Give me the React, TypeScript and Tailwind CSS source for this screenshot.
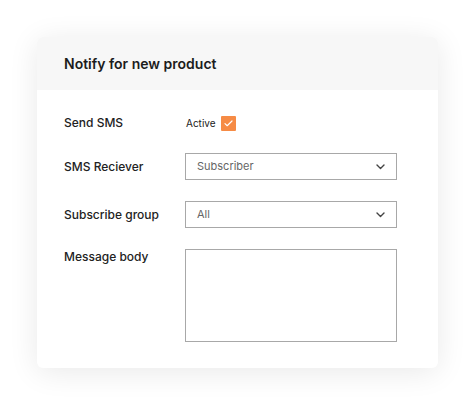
import React from "react";

function Chevron() {
  return (
    <svg width="9" height="6" viewBox="0 0 9 6" fill="none" className="shrink-0">
      <path d="M1 1l3.5 3.5L8 1" stroke="#444" strokeWidth="1.4" strokeLinecap="round" strokeLinejoin="round" />
    </svg>
  );
}

function SelectBox({ value }: { value: string }) {
  return (
    <div className="flex h-[27px] w-[212px] items-center justify-between border border-[#a8a8a8] bg-white pl-[11px] pr-[11px]">
      <span className="text-[11px] text-[#666]">{value}</span>
      <Chevron />
    </div>
  );
}

export default function App() {
  return (
    <div className="min-h-[405px] w-[474px] bg-white pl-[37px] pt-[37px] font-['Inter','Noto_Sans',sans-serif]">
      <div className="w-[401px] overflow-hidden rounded-[6px] bg-white shadow-[0_4px_30px_rgba(0,0,0,0.09)]">
        <div className="flex h-[53px] items-center bg-[#f7f7f7] pl-[27px]">
          <h1 className="text-[14px] font-semibold text-[#1c1c1c]">Notify for new product</h1>
        </div>
        <div className="pb-[26px] pl-[27px] pt-[23px]">
          <div className="flex h-[20px] items-center">
            <span className="w-[122px] text-[12px] font-medium text-[#222]">Send SMS</span>
            <span className="text-[10px] text-[#222]">Active</span>
            <span className="ml-[5px] flex h-[15px] w-[15px] items-center justify-center rounded-[1px] bg-[#f68b45]">
              <svg width="9" height="7" viewBox="0 0 9 7" fill="none">
                <path d="M1 3.6l2.2 2.1L8 1" stroke="#fff" strokeWidth="1.2" strokeLinecap="round" strokeLinejoin="round" />
              </svg>
            </span>
          </div>
          <div className="mt-[20px] flex items-center">
            <span className="w-[121px] text-[12px] font-medium text-[#222]">SMS Reciever</span>
            <SelectBox value="Subscriber" />
          </div>
          <div className="mt-[21px] flex items-center">
            <span className="w-[121px] text-[12px] font-medium text-[#222]">Subscribe group</span>
            <SelectBox value="All" />
          </div>
          <div className="mt-[21px] flex items-start">
            <span className="w-[121px] text-[12px] leading-[16px] font-medium text-[#222]">Message body</span>
            <div className="h-[93px] w-[212px] border border-[#a8a8a8] bg-white" />
          </div>
        </div>
      </div>
    </div>
  );
}
